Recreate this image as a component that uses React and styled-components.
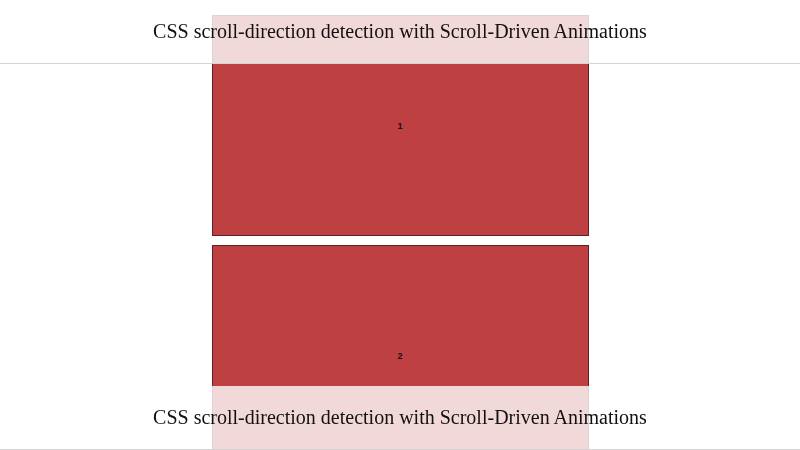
import React from "react";
import styled, { createGlobalStyle } from "styled-components";

const Global = createGlobalStyle`
  html, body { margin: 0; padding: 0; background: #fff; }
  body { font-family: "Liberation Serif", "Times New Roman", serif; overflow: hidden; height: 450px; }
`;

const Bar = styled.header`
  position: fixed;
  left: 0;
  right: 0;
  ${(p) => (p.$bottom ? "bottom: 0;" : "top: 0;")}
  height: 63px;
  display: flex;
  align-items: center;
  justify-content: center;
  background: rgba(255, 255, 255, 0.8);
  border-bottom: 1px solid #d4d4d4;
  z-index: 2;
`;

const Title = styled.h1`
  margin: 0;
  font-family: "Liberation Serif", "Times New Roman", serif;
  font-weight: 400;
  font-size: 20px;
  color: #111;
`;

const Main = styled.main`
  display: flex;
  flex-direction: column;
  align-items: center;
  gap: 9px;
  padding-top: 15px;
`;

const Box = styled.div`
  box-sizing: border-box;
  width: 377px;
  height: 221px;
  flex-shrink: 0;
  display: flex;
  align-items: center;
  justify-content: center;
  background: #bf4042;
  border: 1px solid #5e2223;
  font-family: "Liberation Sans", Arial, sans-serif;
  font-weight: 700;
  font-size: 9px;
  color: #111;
`;

const items = [1, 2];

export default function App() {
  return (
    <>
      <Global />
      <Bar>
        <Title>CSS scroll-direction detection with Scroll-Driven Animations</Title>
      </Bar>
      <Main>
        {items.map((n) => (
          <Box key={n}>{n}</Box>
        ))}
      </Main>
      <Bar as="footer" $bottom>
        <Title>CSS scroll-direction detection with Scroll-Driven Animations</Title>
      </Bar>
    </>
  );
}
